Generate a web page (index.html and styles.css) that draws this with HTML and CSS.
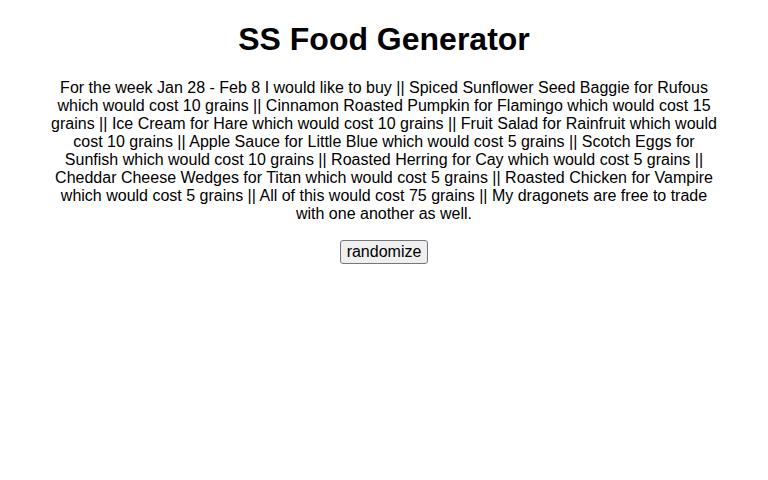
FILE: index.html
```html
<!DOCTYPE html>
<html lang="en">
<head>
    <meta charset="UTF-8">
    <meta name="viewport" content="width=device-width, initial-scale=1.0">
    <title>SS Food Generator</title>
    <link rel="stylesheet" href="styles.css">
</head>
<body>

    <h1>SS Food Generator</h1>

    <p id="order">For the week Jan 28 - Feb 8 I would like to buy || Spiced Sunflower Seed Baggie for Rufous which would cost 10 grains || Cinnamon Roasted Pumpkin for Flamingo which would cost 15 grains || Ice Cream for Hare which would cost 10 grains || Fruit Salad for Rainfruit which would cost 10 grains || Apple Sauce for Little Blue which would cost 5 grains || Scotch Eggs for Sunfish which would cost 10 grains || Roasted Herring for Cay which would cost 5 grains || Cheddar Cheese Wedges for Titan which would cost 5 grains || Roasted Chicken for Vampire which would cost 5 grains || All of this would cost 75 grains || My dragonets are free to trade with one another as well.</p>

    <div class="controls">
        <button type="button" id="randomize">randomize</button>
    </div>

</body>
</html>
```

FILE: styles.css
```css
body {
    font-family: "Liberation Sans", Arial, sans-serif;
    margin: 0;
    text-align: center;
    color: #000;
    background-color: #fff;
}

h1 {
    font-size: 32px;
    margin: 21px 0;
}

p {
    font-size: 16px;
    line-height: 18px;
    margin: 16px 48px;
}

.controls {
    padding-top: 1px;
}

button {
    font-family: "Liberation Sans", Arial, sans-serif;
    font-size: 16px;
    line-height: 18px;
    padding: 2px 6px;
    border: 1px solid #767676;
    border-radius: 3px;
    background-color: #efefef;
    color: #000;
    cursor: pointer;
}

button:hover {
    background-color: #e5e5e5;
}
```
